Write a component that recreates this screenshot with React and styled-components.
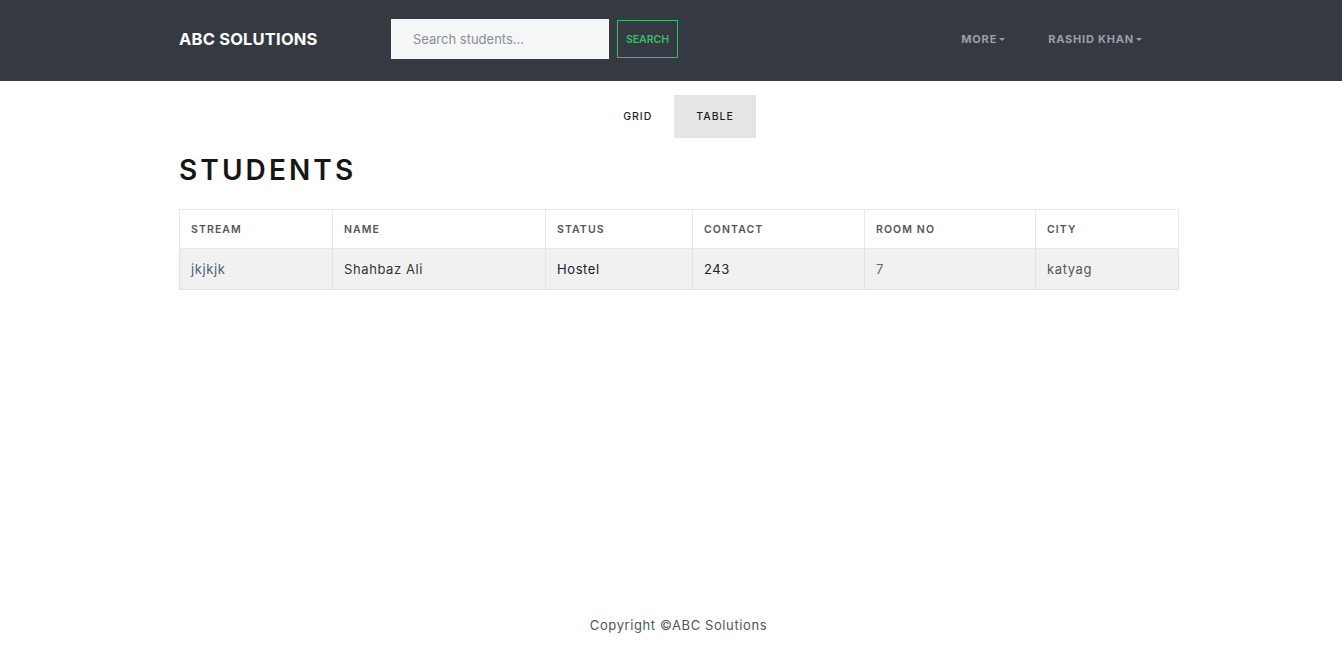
import React from "react";
import styled, { createGlobalStyle } from "styled-components";

const GlobalStyle = createGlobalStyle`
  * { box-sizing: border-box; }
  body {
    margin: 0;
    font-family: Inter, "Noto Sans", sans-serif;
    background: #fff;
    color: #222;
  }
`;

const columns = [
  { key: "stream", label: "STREAM", width: 153, color: "#4b6170" },
  { key: "name", label: "NAME", width: 213, color: "#333333" },
  { key: "status", label: "STATUS", width: 147, color: "#14202c" },
  { key: "contact", label: "CONTACT", width: 172, color: "#222222" },
  { key: "room", label: "ROOM NO", width: 171, color: "#666666" },
  { key: "city", label: "CITY", width: 143, color: "#5e5258" },
];

const students = [
  {
    stream: "jkjkjk",
    name: "Shahbaz Ali",
    status: "Hostel",
    contact: "243",
    room: "7",
    city: "katyag",
  },
];

export default function App() {
  return (
    <>
      <GlobalStyle />
      <Page>
        <NavBar>
          <NavInner>
            <Brand>ABC SOLUTIONS</Brand>
            <SearchForm onSubmit={(e) => e.preventDefault()}>
              <SearchInput placeholder="Search students..." />
              <SearchButton type="submit">SEARCH</SearchButton>
            </SearchForm>
            <NavMenu>
              <NavLink>
                MORE <Caret />
              </NavLink>
              <NavLink>
                RASHID KHAN <Caret />
              </NavLink>
            </NavMenu>
          </NavInner>
        </NavBar>

        <Main>
          <Toggle>
            <ToggleButton>GRID</ToggleButton>
            <ToggleButton active>TABLE</ToggleButton>
          </Toggle>

          <Title>STUDENTS</Title>

          <Table>
            <colgroup>
              {columns.map((c) => (
                <col key={c.key} style={{ width: c.width }} />
              ))}
            </colgroup>
            <thead>
              <tr>
                {columns.map((c) => (
                  <Th key={c.key}>{c.label}</Th>
                ))}
              </tr>
            </thead>
            <tbody>
              {students.map((s) => (
                <tr key={s.name}>
                  {columns.map((c) => (
                    <Td key={c.key} color={c.color}>
                      {s[c.key]}
                    </Td>
                  ))}
                </tr>
              ))}
            </tbody>
          </Table>
        </Main>

        <Footer>Copyright ©ABC Solutions</Footer>
      </Page>
    </>
  );
}

const Page = styled.div`
  min-height: 100vh;
  display: flex;
  flex-direction: column;
`;

const NavBar = styled.nav`
  background: #353a42;
  height: 81px;
  padding-left: 15px;
`;

const NavInner = styled.div`
  width: 999px;
  margin: 0 auto;
  height: 100%;
  display: flex;
  align-items: center;
`;

const Brand = styled.div`
  color: #fff;
  font-size: 16.5px;
  font-weight: 700;
  letter-spacing: 0.2px;
  width: 212px;
  margin-top: -4px;
`;

const SearchForm = styled.form`
  display: flex;
  align-items: center;
  gap: 8px;
  margin-top: -3px;
`;

const SearchInput = styled.input`
  width: 218px;
  height: 40px;
  border: none;
  outline: none;
  background: #f5f6f8;
  padding: 0 22px;
  font-family: Inter, sans-serif;
  font-size: 13px;
  color: #333;

  &::placeholder {
    color: #8a8f96;
  }
`;

const SearchButton = styled.button`
  height: 38px;
  width: 61px;
  background: transparent;
  border: 1px solid #3dba6a;
  color: #3dba6a;
  font-family: Inter, sans-serif;
  font-size: 10.5px;
  font-weight: 600;
  padding: 0;
  cursor: pointer;
`;

const NavMenu = styled.div`
  margin-left: auto;
  margin-right: 36px;
  display: flex;
  gap: 43px;
  margin-top: -3px;
`;

const NavLink = styled.span`
  color: #9a9fa6;
  font-size: 11px;
  font-weight: 700;
  letter-spacing: 0.8px;
  display: flex;
  align-items: center;
`;

const Caret = styled.i`
  display: inline-block;
  margin-left: 2px;
  border-top: 3px solid #9a9fa6;
  border-left: 3px solid transparent;
  border-right: 3px solid transparent;
`;

const Main = styled.main`
  width: 999px;
  margin: 0 auto;
  position: relative;
  left: 7.5px;
`;

const Toggle = styled.div`
  display: flex;
  justify-content: center;
  margin-top: 14px;
`;

const ToggleButton = styled.button`
  height: 43px;
  padding: 0 22px;
  border: none;
  background: ${(p) => (p.active ? "#e5e5e5" : "transparent")};
  color: #1e1e1e;
  font-family: Inter, sans-serif;
  font-size: 10.5px;
  font-weight: 500;
  letter-spacing: 1px;
  cursor: pointer;
`;

const Title = styled.h1`
  margin: 14px 0 21px;
  font-size: 28px;
  line-height: 36px;
  font-weight: 600;
  letter-spacing: 3.1px;
  color: #161616;
`;

const Table = styled.table`
  width: 999px;
  border-collapse: collapse;
  table-layout: fixed;
`;

const Th = styled.th`
  height: 39px;
  padding: 0 11px;
  text-align: left;
  font-size: 10.5px;
  font-weight: 600;
  letter-spacing: 1.1px;
  color: #555;
  border: 1px solid #e8e8e8;
  background: #fff;
`;

const Td = styled.td`
  height: 41px;
  padding: 0 11px;
  font-size: 13px;
  letter-spacing: 0.6px;
  color: ${(p) => p.color};
  background: #f1f1f1;
  border: 1px solid #e2e2e2;
`;

const Footer = styled.footer`
  margin-top: auto;
  padding: 0 0 16px 15px;
  text-align: center;
  font-size: 13px;
  line-height: 20px;
  letter-spacing: 0.6px;
  color: #555;
`;
